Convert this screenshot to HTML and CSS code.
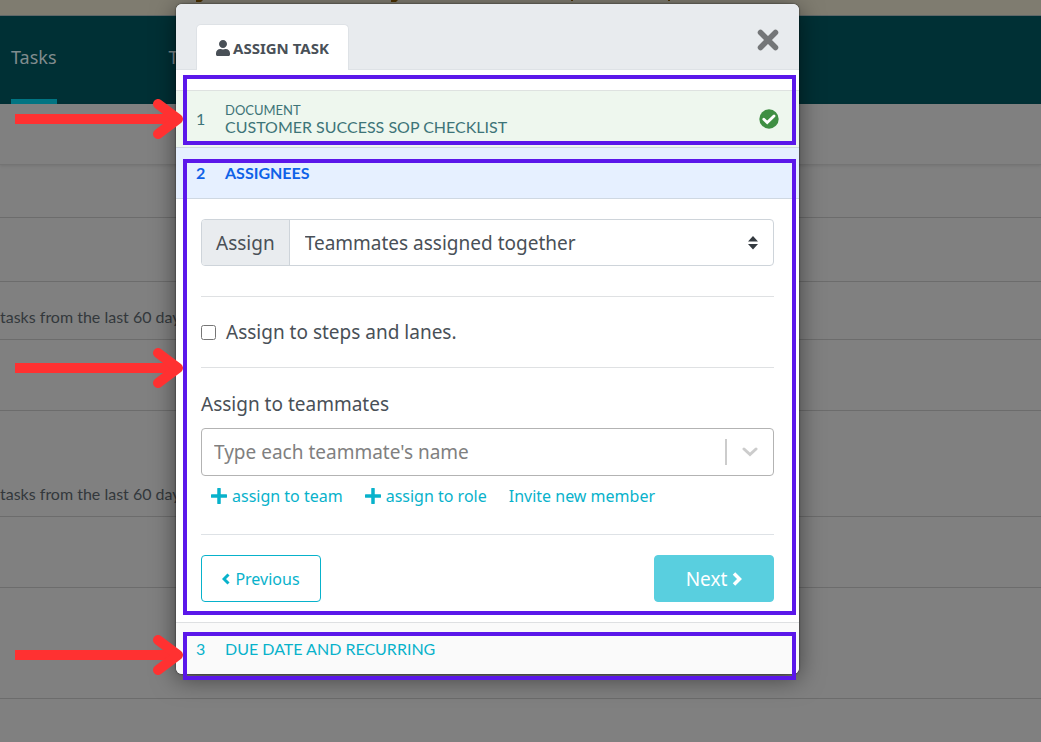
FILE: index.html
```html
<!DOCTYPE html>
<html lang="en">

<head>
    <meta charset="UTF-8">
    <title>Assign Task</title>
    <link rel="stylesheet" href="styles.css">
</head>

<body>
    <div class="page">
        <div class="banner">
            <svg width="480" height="2" viewBox="0 0 480 2" fill="#4a3000"><path d="M0 0h7l-2 2H0zM195 0h7l-2 2h-5zM375 0h2v1h-2zM472 0h2v1h-2z"/></svg>
        </div>
        <nav class="navbar">
            <a href="#" class="nav-link active">Tasks</a>
            <a href="#" class="nav-link">T</a>
        </nav>
        <div class="row row-toolbar"></div>
        <div class="row row-sm"></div>
        <div class="row row-md"></div>
        <div class="row row-note">tasks from the last 60 days</div>
        <div class="row row-lg"></div>
        <div class="row row-summary">tasks from the last 60 days</div>
        <div class="row row-lg"></div>
        <div class="row row-xl"></div>
    </div>

    <div class="overlay">
        <div class="modal" role="dialog" aria-label="Assign task">
            <div class="modal-header">
                <div class="tab">
                    <svg width="14" height="16" viewBox="0 0 448 512" fill="currentColor"><path d="M224 256c70.700 0 128-57.300 128-128S294.700 0 224 0 96 57.300 96 128s57.300 128 128 128zm89.600 32h-16.700c-22.200 10.200-46.900 16-72.900 16s-50.600-5.800-72.900-16h-16.700C60.200 288 0 348.200 0 422.400V464c0 26.500 21.500 48 48 48h352c26.500 0 48-21.500 48-48v-41.600c0-74.200-60.200-134.400-134.400-134.400z"/></svg>
                    ASSIGN TASK
                </div>
                <button class="close" aria-label="Close">
                    <svg width="22" height="22" viewBox="0 0 22 22"><path d="M3.500 3.500l15 15M18.500 3.500l-15 15" stroke="currentColor" stroke-width="5.500" stroke-linecap="round"/></svg>
                </button>
            </div>

            <div class="step step-done">
                <span class="step-number">1</span>
                <div class="step-title">
                    <small>DOCUMENT</small>
                    <span>CUSTOMER SUCCESS SOP CHECKLIST</span>
                </div>
                <svg class="check" width="20" height="20" viewBox="0 0 20 20"><circle cx="10" cy="10" r="9.700" fill="#3f8f43"/><path d="M4.800 10.300l3.400 3.200 6.800-6.600" fill="none" stroke="#fff" stroke-width="2.800" stroke-linecap="round"/></svg>
            </div>

            <div class="step step-active">
                <span class="step-number">2</span>
                <span class="step-title">ASSIGNEES</span>
            </div>

            <form class="step-body">
                <div class="input-group">
                    <label for="mode">Assign</label>
                    <div class="select-wrap">
                        <select id="mode">
                            <option>Teammates assigned together</option>
                        </select>
                        <svg class="caret" width="10" height="14" viewBox="0 0 10 14" fill="#343a40"><path d="M0 5.500L5 0l5 5.500zM0 8l5 5.500L10 8z"/></svg>
                    </div>
                </div>
                <div class="check-row">
                    <input type="checkbox" id="lanes">
                    <label for="lanes">Assign to steps and lanes.</label>
                </div>
                <label class="field-label" for="teammates">Assign to teammates</label>
                <div class="combo">
                    <input type="text" id="teammates" placeholder="Type each teammate's name">
                    <span class="divider"></span>
                    <svg width="16" height="10" viewBox="0 0 16 10"><path d="M2 2l6 5.500L14 2" fill="none" stroke="#ccc" stroke-width="3" stroke-linecap="round"/></svg>
                </div>
                <div class="links">
                    <a href="#"><svg width="16" height="16" viewBox="0 0 16 16"><path d="M8 1v14M1 8h14" stroke="currentColor" stroke-width="3.500" stroke-linecap="round"/></svg>assign to team</a>
                    <a href="#"><svg width="16" height="16" viewBox="0 0 16 16"><path d="M8 1v14M1 8h14" stroke="currentColor" stroke-width="3.500" stroke-linecap="round"/></svg>assign to role</a>
                    <a href="#">Invite new member</a>
                </div>
                <div class="actions">
                    <button type="button" class="btn btn-outline"><svg width="8" height="12" viewBox="0 0 8 12"><path d="M6.500 1.500L2 6l4.500 4.500" fill="none" stroke="currentColor" stroke-width="3"/></svg>Previous</button>
                    <button type="button" class="btn btn-primary">Next<svg width="10" height="14" viewBox="0 0 10 14"><path d="M2 1.500L7.500 7 2 12.500" fill="none" stroke="currentColor" stroke-width="3.500"/></svg></button>
                </div>
            </form>

            <div class="step step-next">
                <span class="step-number">3</span>
                <span class="step-title">DUE DATE AND RECURRING</span>
            </div>

            <!-- callouts drawn over the dialog -->
            <div class="callout callout-document">
                <svg class="arrow" width="172" height="40" viewBox="0 0 172 40"><path d="M0 20h158" stroke-width="10"/><path d="M143 5l20 15-20 15" stroke-width="10" stroke-linecap="round" stroke-linejoin="round"/></svg>
            </div>
            <div class="callout callout-assignees">
                <svg class="arrow" width="172" height="40" viewBox="0 0 172 40"><path d="M0 20h158" stroke-width="10"/><path d="M143 5l20 15-20 15" stroke-width="10" stroke-linecap="round" stroke-linejoin="round"/></svg>
            </div>
            <div class="callout callout-due">
                <svg class="arrow" width="172" height="40" viewBox="0 0 172 40"><path d="M0 20h158" stroke-width="10"/><path d="M143 5l20 15-20 15" stroke-width="10" stroke-linecap="round" stroke-linejoin="round"/></svg>
            </div>
        </div>
    </div>
</body>

</html>
```
FILE: styles.css
```css
* {
    box-sizing: border-box;
}

body {
    margin: 0;
    font-family: 'Noto Sans', sans-serif;
    font-size: 19px;
    color: #495057;
    background: #808080;
    overflow: hidden;
}

button,
input,
select {
    font: inherit;
    color: inherit;
}

.banner {
    display: flex;
    align-items: flex-start;
    height: 16px;
    padding-left: 196px;
    background: #7f7c70;
    border-bottom: 1px solid #5f6768;
}

.navbar {
    display: flex;
    gap: 112px;
    height: 88px;
    padding-left: 11px;
    background: #003035;
}

.nav-link {
    color: #808c8e;
    text-decoration: none;
    font-size: 18px;
    line-height: 83px;
    border-bottom: 5px solid transparent;
}

.nav-link.active {
    border-color: #007482;
}

.row {
    display: flex;
    align-items: flex-end;
    border-bottom: 1px solid #6c6c6c;
    font-family: Lato, sans-serif;
    font-size: 16px;
    line-height: 24px;
    color: #33383c;
}

.row-toolbar {
    height: 61px;
    border-color: #747474;
    box-shadow: 0 1px 3px rgba(0, 0, 0, 0.1);
}

.row-sm {
    height: 53px;
}

.row-md {
    height: 64px;
}

.row-note {
    height: 58px;
    padding-bottom: 10px;
}

.row-lg {
    height: 71px;
}

.row-summary {
    height: 106px;
    padding-bottom: 10px;
}

.row-xl {
    height: 111px;
}

.overlay {
    position: absolute;
    inset: 0;
    padding: 4px 242px 0 176px;
}

.modal {
    position: relative;
    background: #fff;
    border-radius: 6px;
    box-shadow: 0 5px 25px rgba(0, 0, 0, 0.5), 0 0 2px rgba(0, 0, 0, 0.7);
}

.modal-header {
    display: flex;
    justify-content: space-between;
    align-items: flex-end;
    height: 66px;
    padding: 0 20px;
    background: #e8ebee;
    border-bottom: 1px solid #dee2e6;
    border-radius: 6px 6px 0 0;
}

.tab {
    display: flex;
    align-items: center;
    gap: 3px;
    height: 46px;
    margin-bottom: -1px;
    padding: 0 19px;
    background: #fff;
    border: 1px solid #dee2e6;
    border-bottom: none;
    border-radius: 5px 5px 0 0;
    font-size: 15px;
    font-weight: 700;
}

.close {
    display: flex;
    align-self: center;
    padding: 6px 0 0;
    background: none;
    border: none;
    color: #747678;
}

.step {
    display: flex;
    align-items: center;
    padding: 0 20px;
    font-family: Lato, sans-serif;
    font-size: 16px;
    line-height: 18px;
}

.step-number {
    width: 29px;
}

.step-title {
    flex: 1;
}

.step-title small {
    display: block;
    font-size: 13px;
    line-height: 16px;
}

.step-done {
    height: 57px;
    margin-top: 20px;
    background: #eef7ee;
    border-top: 1px solid #dee2e0;
    color: #3d7478;
}

.step-active {
    height: 52px;
    background: #e6f0ff;
    border: 1px solid #cfd8e2;
    border-width: 1px 0;
    color: #0f62e8;
    font-weight: 700;
}

.step-next {
    height: 52px;
    background: #fafafa;
    border-top: 1px solid #dee0e2;
    border-radius: 0 0 6px 6px;
    color: #08b2cb;
}

.step-body {
    padding: 20px 25px;
}

.input-group {
    display: flex;
    height: 47px;
    border: 1px solid #ced4da;
    border-radius: 4px;
}

.input-group label {
    display: flex;
    align-items: center;
    padding: 0 14px;
    background: #e9ecef;
    border-right: 1px solid #ced4da;
    border-radius: 3px 0 0 3px;
}

.select-wrap {
    position: relative;
    flex: 1;
}

select {
    width: 100%;
    height: 100%;
    padding: 0 15px;
    background: none;
    border: none;
    appearance: none;
}

.caret {
    position: absolute;
    top: 16px;
    right: 15px;
    pointer-events: none;
}

.check-row {
    display: flex;
    align-items: center;
    gap: 10px;
    height: 72px;
    margin-top: 30px;
    border: 1px solid #dfe1e3;
    border-width: 1px 0;
}

.check-row input {
    width: 15px;
    height: 15px;
    margin: 0;
}

.field-label {
    display: block;
    margin-top: 20px;
    line-height: 32px;
}

.combo {
    display: flex;
    align-items: center;
    height: 48px;
    margin-top: 8px;
    padding: 0 15px 0 12px;
    border: 1px solid #b3b3b3;
    border-radius: 4px;
}

.combo input {
    flex: 1;
    padding: 0;
    border: none;
    outline: none;
}

.combo input::placeholder {
    color: #808080;
}

.divider {
    width: 2px;
    height: 26px;
    margin-right: 15px;
    background: #ccc;
}

.links {
    display: flex;
    gap: 22px;
    padding: 8px 10px 26px;
    border-bottom: 1px solid #dee2e6;
    font-size: 16px;
    line-height: 24px;
}

.links a {
    display: flex;
    align-items: center;
    gap: 5px;
    color: #08b2cb;
    text-decoration: none;
}

.actions {
    display: flex;
    justify-content: space-between;
    margin-top: 20px;
}

.btn {
    display: flex;
    align-items: center;
    justify-content: center;
    gap: 5px;
    width: 120px;
    height: 47px;
    border: 1px solid #08b2cb;
    border-radius: 4px;
}

.btn-outline {
    background: #fff;
    color: #08b2cb;
    font-size: 16px;
}

.btn-primary {
    background: #59cfdf;
    border-color: #59cfdf;
    color: #fff;
}

.callout {
    position: absolute;
    left: 7px;
    right: 3px;
    border: 4px solid #5b17ea;
    pointer-events: none;
}

.callout-document {
    top: 71px;
    height: 70px;
}

.callout-assignees {
    top: 155px;
    height: 456px;
}

.callout-due {
    top: 628px;
    height: 48px;
}

.arrow {
    position: absolute;
    right: 100%;
    fill: none;
    stroke: #ff3131;
}

.callout-document .arrow {
    top: 20px;
}

.callout-assignees .arrow {
    top: 185px;
}

.callout-due .arrow {
    top: -1px;
}
```
